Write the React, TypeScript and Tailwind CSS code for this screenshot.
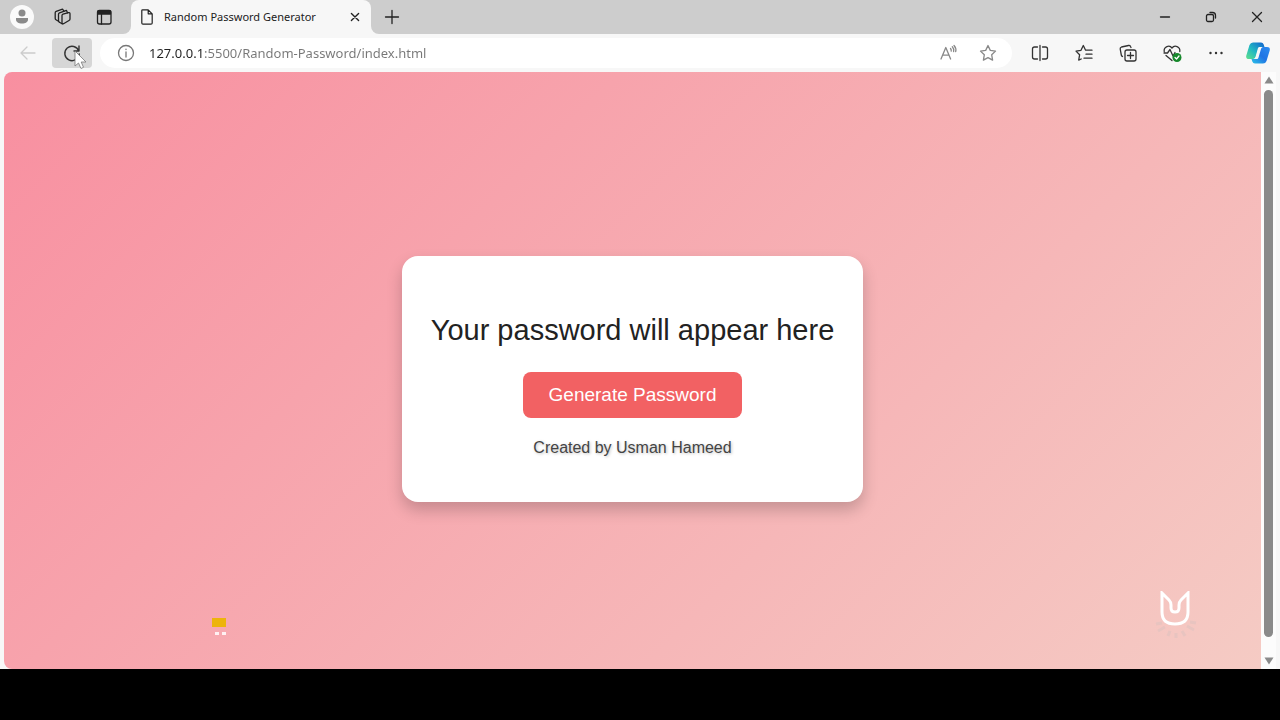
import React, { useState } from 'react';

const CHARS = 'ABCDEFGHIJKLMNOPQRSTUVWXYZabcdefghijklmnopqrstuvwxyz0123456789!@#$%&*';

function createPassword(length: number) {
  let result = '';
  for (let i = 0; i < length; i++) {
    result += CHARS[Math.floor(Math.random() * CHARS.length)];
  }
  return result;
}

interface IconProps {
  children: React.ReactNode;
  className?: string;
}

function Icon({ children, className = 'w-5 h-5' }: IconProps) {
  return (
    <svg
      viewBox="0 0 20 20"
      fill="none"
      stroke="currentColor"
      strokeWidth="1.3"
      strokeLinecap="round"
      strokeLinejoin="round"
      className={className}
      aria-hidden="true"
    >
      {children}
    </svg>
  );
}

function IconButton({ label, children }: { label: string; children: React.ReactNode }) {
  return (
    <button type="button" aria-label={label} className="w-6 h-6 flex items-center justify-center shrink-0">
      {children}
    </button>
  );
}

function TabStrip() {
  return (
    <div className="h-[34px] flex shrink-0 bg-[#f7f7f7] text-[#222222]">
      <div className="flex items-center gap-[17px] pl-[10px] pr-[15px] bg-[#cdcdcd] rounded-br-lg">
        <IconButton label="Profile">
          <svg viewBox="0 0 24 24" className="w-6 h-6" aria-hidden="true">
            <circle cx="12" cy="12" r="12" fill="#fafafa" />
            <circle cx="12" cy="8" r="3.5" fill="#8a8a8a" />
            <path d="M6 13h12v1.500c0 2.500-2.500 4-6 4s-6-1.500-6-4z" fill="#8a8a8a" />
          </svg>
        </IconButton>
        <IconButton label="Workspaces">
          <Icon>
            <path d="M9 8.500Q9 7.500 10 7.200L15.500 5.600Q17 5.300 17 6.800V12Q17 13 16 13.500L10.500 16.700Q9 17.300 9 15.800z" />
            <path d="M9 16.800L6.500 15.300Q5.500 14.800 5.500 13.800V7.300Q5.500 6.300 6.500 5.900L13.500 3.400L14.500 5.800" />
            <path d="M5.500 14.300L3.300 13Q2.200 12.500 2.200 11.500V5.800Q2.200 4.800 3.200 4.400L9.500 2.200L11 4.200" />
          </Icon>
        </IconButton>
        <IconButton label="Tab actions">
          <Icon>
            <rect x="3.500" y="3.500" width="13.500" height="13.500" rx="2" />
            <path d="M7.500 7v10" />
            <path d="M4 4h12.500v3H4z" fill="currentColor" />
          </Icon>
        </IconButton>
      </div>
      <div className="w-60 bg-[#cdcdcd] flex flex-col">
        <div className="flex-1 bg-[#f7f7f7] rounded-t-lg flex items-center pl-2 pr-1">
          <Icon className="w-4 h-4 shrink-0">
            <path strokeWidth="1.500" d="M4.500 1h7l5 5v11.500q0 1.500-1.500 1.500H5q-1.500 0-1.500-1.500V2Q3.500 1 4.500 1zM11.500 1v5h5" />
          </Icon>
          <span className="flex-1 pl-[9px] text-[11px] leading-4 whitespace-nowrap">Random Password Generator</span>
          <IconButton label="Close tab">
            <Icon className="w-4 h-4">
              <path strokeWidth="1.700" d="M5.500 5.500l9 9M14.500 5.500l-9 9" />
            </Icon>
          </IconButton>
        </div>
      </div>
      <div className="flex-1 flex items-center justify-between pl-[9px] pr-[11px] bg-[#cdcdcd] rounded-bl-lg">
        <IconButton label="New tab">
          <Icon>
            <path d="M10 3.500v13M3.500 10h13" />
          </Icon>
        </IconButton>
        <div className="flex items-center gap-[22px]">
          <IconButton label="Minimize">
            <Icon>
              <path d="M5.500 10h9" />
            </Icon>
          </IconButton>
          <IconButton label="Restore">
            <Icon>
              <rect x="5.500" y="7.500" width="7" height="7" rx="1.500" />
              <path d="M9 5.500h2.500q3 0 3 3V11" />
            </Icon>
          </IconButton>
          <IconButton label="Close window">
            <Icon>
              <path d="M5.500 5.500l9 9M14.500 5.500l-9 9" />
            </Icon>
          </IconButton>
        </div>
      </div>
    </div>
  );
}

function Toolbar() {
  const [address, setAddress] = useState('127.0.0.1:5500/Random-Password/index.html');

  return (
    <div className="h-[38px] flex items-center shrink-0 bg-[#f7f7f7] pl-4 pr-[10px] text-[#333333]">
      <span className="text-[#cccccc] flex">
        <IconButton label="Back">
          <Icon>
            <path d="M17 10H3M9 4l-6 6 6 6" />
          </Icon>
        </IconButton>
      </span>
      <button
        type="button"
        aria-label="Refresh"
        className="relative w-10 h-[30px] ml-3 rounded bg-[#d6d6d6] flex items-center justify-center shrink-0"
      >
        <Icon>
          <path strokeWidth="1.400" d="M16.800 8A7.200 7.200 0 1 0 17.200 11M17 3v5h-5" />
        </Icon>
        {/* mouse pointer resting on refresh */}
        <svg viewBox="0 0 14 20" className="absolute left-[22px] top-3 w-[14px] h-5" aria-hidden="true">
          <path d="M1 1v15l3.500-3 2.500 5.500 2.500-1.200L7.200 12H12z" fill="#ffffff" stroke="#777777" strokeWidth="0.800" />
        </svg>
      </button>
      <div className="flex-1 h-[30px] ml-2 pl-4 pr-3 flex items-center rounded-full bg-white text-[#777777]">
        <Icon className="w-5 h-5 shrink-0">
          <circle cx="10" cy="10" r="7.500" />
          <path d="M10 9v5M10 6.200v0.300" />
        </Icon>
        {/* the host part of the address is darker than the path */}
        <input
          type="text"
          aria-label="Address"
          value={address}
          onChange={(e) => setAddress(e.target.value)}
          className="flex-1 min-w-0 ml-[13px] text-[13px] leading-5 outline-none caret-black text-transparent bg-clip-text bg-linear-to-r from-[#222222] from-[55px] to-[#777777] to-[55px]"
        />
        <div className="flex gap-4 text-[#888888]">
          <IconButton label="Read aloud">
            <Icon>
              <path d="M3 16L7.800 4.500l4.800 11.500M4.600 12.200h6.400M12.500 5.500q1 1.200.7 2.700M14.300 3.800q2 2 1.300 4.700M16 2.500q2.600 2.800 1.700 6.200" />
            </Icon>
          </IconButton>
          <IconButton label="Add to favorites">
            <Icon>
              <path d="M10 2.500l2.300 4.900 5.200.7-3.800 3.700.9 5.300L10 14.600l-4.600 2.500.9-5.300L2.500 8.100l5.200-.7z" />
            </Icon>
          </IconButton>
        </div>
      </div>
      <div className="flex items-center gap-5 ml-4">
        <IconButton label="Split screen">
          <Icon>
            <path d="M7.500 4H4.500Q2.500 4 2.500 6v8q0 2 2 2H7.500M12.500 4h3Q17.500 4 17.500 6v8q0 2-2 2h-3M10 2.500v15" />
          </Icon>
        </IconButton>
        <IconButton label="Favorites">
          <Icon>
            <path d="M7.200 16L4.700 17.100l.9-5.300L2 8.100l5-.8L9.300 2.500l2.300 4.700H18M12 11.200h6M10 15.200h8" />
          </Icon>
        </IconButton>
        <IconButton label="Collections">
          <Icon>
            <rect x="7" y="7" width="11" height="11" rx="2" />
            <path d="M12.500 9.500v6M9.500 12.500h6M4.500 13.500Q3.500 13 3.300 12L2.200 6Q2 4.500 3.500 4L10.500 2.500Q12 2.300 12.500 3.500L13 4.500" />
          </Icon>
        </IconButton>
        <IconButton label="Browser essentials">
          <Icon>
            <path d="M2.200 8.500C1.500 3.500 7.500 1.500 10 5c2.500-3.500 8.500-1.500 7.800 3.500M4 12.500l6 5M2 10h3.500L8 6.500l3 6.500 2-3.500" />
            <circle cx="15" cy="14.500" r="4.500" fill="#16882b" stroke="none" />
            <path stroke="#ffffff" d="M13 14.500l1.500 1.500 2.500-3" />
          </Icon>
        </IconButton>
        <IconButton label="Settings and more">
          <Icon>
            <path strokeWidth="2.400" d="M4.500 10h.01M10 10h.01M15.500 10h.01" />
          </Icon>
        </IconButton>
      </div>
      <button type="button" aria-label="Copilot" className="ml-[18px] w-6 h-6 shrink-0">
        <svg viewBox="0 0 24 24" className="w-6 h-6" aria-hidden="true">
          <defs>
            <linearGradient id="copilotLeft" x1="0" y1="1" x2="1" y2="0">
              <stop offset="0" stopColor="#62e08a" />
              <stop offset="0.450" stopColor="#22b9c2" />
              <stop offset="1" stopColor="#1160cf" />
            </linearGradient>
            <linearGradient id="copilotRight" x1="0" y1="1" x2="1" y2="0">
              <stop offset="0" stopColor="#2cc3e8" />
              <stop offset="0.500" stopColor="#2174e4" />
              <stop offset="1" stopColor="#2b8cf0" />
            </linearGradient>
          </defs>
          <path
            d="M7 1.500h8q2 0 2.700 2l.8 2.500H15q-2 0-2.700 2l-2.500 8Q9 18 7 18H3q-3.500 0-2.700-3.500L3.500 4Q4.500 1.500 7 1.500z"
            fill="url(#copilotLeft)"
          />
          <path
            d="M17 22.500H9q-2 0-2.700-2L5.500 18H9q2 0 2.700-2l2.500-8Q15 6 17 6h4q3.500 0 2.700 3.500L20.500 20q-1 2.500-3.500 2.500z"
            fill="url(#copilotRight)"
          />
          <path d="M12 7q.5-1 1.500-1h3q-1 .5-1.500 2l-2.500 8.500q-.5 1.500-1.500 1.500H8q1-.5 1.500-2z" fill="#f7f7f7" />
        </svg>
      </button>
    </div>
  );
}

function Scrollbar() {
  return (
    <div className="w-[15px] flex flex-col items-center py-1 shrink-0 bg-[#fcfcfc]" aria-hidden="true">
      <svg viewBox="0 0 10 8" className="w-[10px] h-2 shrink-0">
        <path d="M5 0.500L9.500 7.500h-9z" fill="#8a8a8a" />
      </svg>
      <div className="flex-1 w-[9px] mt-[6px] mb-5 rounded-full bg-[#8a8a8a]" />
      <svg viewBox="0 0 10 8" className="w-[10px] h-2 shrink-0">
        <path d="M5 7.500L9.500 0.500h-9z" fill="#8a8a8a" />
      </svg>
    </div>
  );
}

export default function App() {
  const [password, setPassword] = useState('Your password will appear here');

  return (
    <div className="h-screen flex flex-col bg-black font-['Noto_Sans',sans-serif] overflow-hidden">
      <TabStrip />
      <Toolbar />

      <div className="flex-1 flex px-1 bg-[#f7f7f7] min-h-0">
        <main className="relative flex-1 flex flex-col items-center justify-center rounded-l-lg bg-[linear-gradient(135deg,#f88fa0,#f5cbc4)] font-['Liberation_Sans',sans-serif]">
          <div className="mt-4 px-[29px] pt-[54px] pb-[42px] flex flex-col items-center rounded-2xl bg-white shadow-[0_8px_16px_rgba(0,0,0,0.2)]">
            <p className="text-[29px] leading-10 text-[#222222] whitespace-nowrap">{password}</p>
            <button
              type="button"
              onClick={() => setPassword(createPassword(12))}
              className="mt-[22px] h-[46px] px-[26px] rounded-lg bg-[#f26163] text-[19px] leading-6 text-white"
            >
              Generate Password
            </button>
            <p className="mt-[18px] text-[16px] leading-6 text-[#444444] [text-shadow:1px_1px_3px_rgba(0,0,0,0.25)]">
              Created by Usman Hameed
            </p>
          </div>

          {/* floating marks over the page */}
          <svg viewBox="0 0 16 20" className="absolute left-[207px] bottom-8 w-4 h-5" aria-hidden="true">
            <path d="M1 1h14v9H1z" fill="#edb40c" />
            <path d="M4 15h4v3H4zM11 15h4v3h-4z" fill="#fff0f2" />
          </svg>
          <svg viewBox="0 0 44 50" className="absolute right-16 bottom-7 w-11 h-[50px]" aria-hidden="true">
            <path
              d="M3 33l6-1M5 40l7-4M15 45l2-5M23 47v-5M32 45l-3-5M41 39l-7-4M43 32l-6-1"
              stroke="#e8c4c0"
              strokeWidth="3"
            />
            <path
              d="M9 2l7 7q2 2 2 5v3q0 4 4 4t4-4v-3q0-3 2-5l7-7v19q0 12-13 12T9 21z"
              fill="none"
              stroke="#ffffff"
              strokeWidth="3"
            />
          </svg>
        </main>
        <Scrollbar />
      </div>

      <div className="h-[51px] shrink-0 bg-black" />
    </div>
  );
}
